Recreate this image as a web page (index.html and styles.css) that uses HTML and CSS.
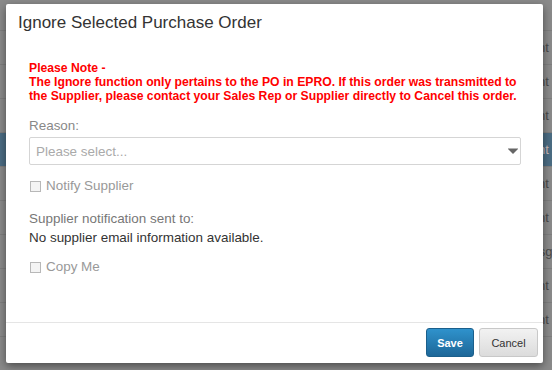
FILE: index.html
```html
<!DOCTYPE html>
<html lang="en">
<head>
    <meta charset="UTF-8">
    <title>Ignore Selected Purchase Order</title>
    <link rel="stylesheet" href="styles.css">
</head>
<body>

    <!-- page behind the dialog, already dimmed by the backdrop -->
    <div class="page">
        <div class="grid-head"></div>
        <div class="grid-row"><span class="cell">Sent</span></div>
        <div class="grid-row"><span class="cell">Sent</span></div>
        <div class="grid-row"><span class="cell">Sent</span></div>
        <div class="grid-row selected"><span class="cell">Sent</span></div>
        <div class="grid-row"><span class="cell">Sent</span></div>
        <div class="grid-row"><span class="cell">Sent</span></div>
        <div class="grid-row"><span class="cell msg">Msg</span></div>
        <div class="grid-row"><span class="cell">Sent</span></div>
        <div class="grid-row"><span class="cell">Sent</span></div>
    </div>

    <div class="modal">
        <div class="modal-header">
            <h4 class="modal-title">Ignore Selected Purchase Order</h4>
        </div>

        <div class="modal-body">
            <p class="note">
                Please Note -<br>
                The Ignore function only pertains to the PO in EPRO. If this order was transmitted to the Supplier, please contact your Sales Rep or Supplier directly to Cancel this order.
            </p>

            <div class="field-label">Reason:</div>
            <div class="select">
                <span class="placeholder">Please select...</span>
                <svg class="caret" width="10" height="6" viewBox="0 0 10 6">
                    <path d="M0 0.5 H10 V1 L5 6 L0 1 Z" fill="#666"/>
                </svg>
            </div>

            <label class="check-row"><span class="checkbox"></span>Notify Supplier</label>

            <div class="info-label">Supplier notification sent to:</div>
            <div class="info-value">No supplier email information available.</div>

            <label class="check-row copy"><span class="checkbox"></span>Copy Me</label>
        </div>

        <div class="modal-footer">
            <button class="btn btn-primary">Save</button>
            <button class="btn btn-default">Cancel</button>
        </div>
    </div>

</body>
</html>
```

FILE: styles.css
```css
body {
    margin: 0;
    background-color: #8a8a8a;
    font-family: "Liberation Sans", Arial, sans-serif;
    overflow: hidden;
}

/* Dimmed grid behind the dialog */
.page {
    width: 552px;
    height: 370px;
}

.grid-head {
    height: 30px;
    border-bottom: 1px solid #7e7e7e;
}

.grid-row {
    height: 33px;
    border-bottom: 1px solid #7e7e7e;
    display: flex;
    align-items: center;
    font-size: 13px;
    color: #4a4a4a;
}

.grid-row .cell {
    margin-left: 522px;
}

.grid-row .cell.msg {
    margin-left: 528px;
}

.grid-row.selected {
    background-color: #4b6c83;
    color: #c9b9b9;
}

/* Dialog */
.modal {
    position: absolute;
    left: 6px;
    top: 4px;
    width: 537px;
    height: 359px;
    background-color: #fff;
    border-radius: 2px;
    box-shadow: 0 3px 9px rgba(0, 0, 0, 0.45);
    display: flex;
    flex-direction: column;
}

.modal-header {
    padding: 7px 12px 0;
}

.modal-title {
    margin: 0;
    font-size: 17px;
    font-weight: normal;
    line-height: 24px;
    color: #333;
}

.modal-body {
    flex: 1;
    padding: 0 22px 0 23px;
    font-size: 13.45px;
    line-height: 19px;
}

.note {
    margin: 26px 0 0;
    color: #f00;
    font-size: 12.2px;
    font-weight: bold;
    line-height: 14px;
}

.field-label {
    margin-top: 13px;
    color: #888;
}

.select {
    margin-top: 2px;
    height: 28px;
    box-sizing: border-box;
    border: 1px solid #d5d5d5;
    border-radius: 2px;
    padding: 0 2px 0 6px;
    display: flex;
    align-items: center;
    justify-content: space-between;
}

.placeholder {
    color: #aaa;
}

.check-row {
    margin-top: 11px;
    display: flex;
    align-items: center;
    color: #999;
}

.check-row.copy {
    margin-top: 10px;
}

.checkbox {
    width: 9px;
    height: 9px;
    margin: 1px 5px 0 1px;
    border: 1px solid #b8b8b8;
    background-color: #f4f4f4;
}

.info-label {
    margin-top: 14px;
    color: #777;
}

.info-value {
    color: #333;
}

.modal-footer {
    border-top: 1px solid #e5e5e5;
    padding: 5px 5px 6px;
    display: flex;
    justify-content: flex-end;
    gap: 5px;
}

.btn {
    height: 29px;
    box-sizing: border-box;
    border-radius: 3px;
    font-family: "Liberation Sans", Arial, sans-serif;
    font-size: 11px;
    cursor: pointer;
}

.btn-primary {
    width: 48px;
    border: 1px solid #1b5f8b;
    background: linear-gradient(#2f92cc, #1d6798);
    color: #fff;
    font-weight: bold;
}

.btn-default {
    width: 59px;
    border: 1px solid #c8c8c8;
    background: linear-gradient(#f2f2f2, #dcdcdc);
    color: #333;
}
```
